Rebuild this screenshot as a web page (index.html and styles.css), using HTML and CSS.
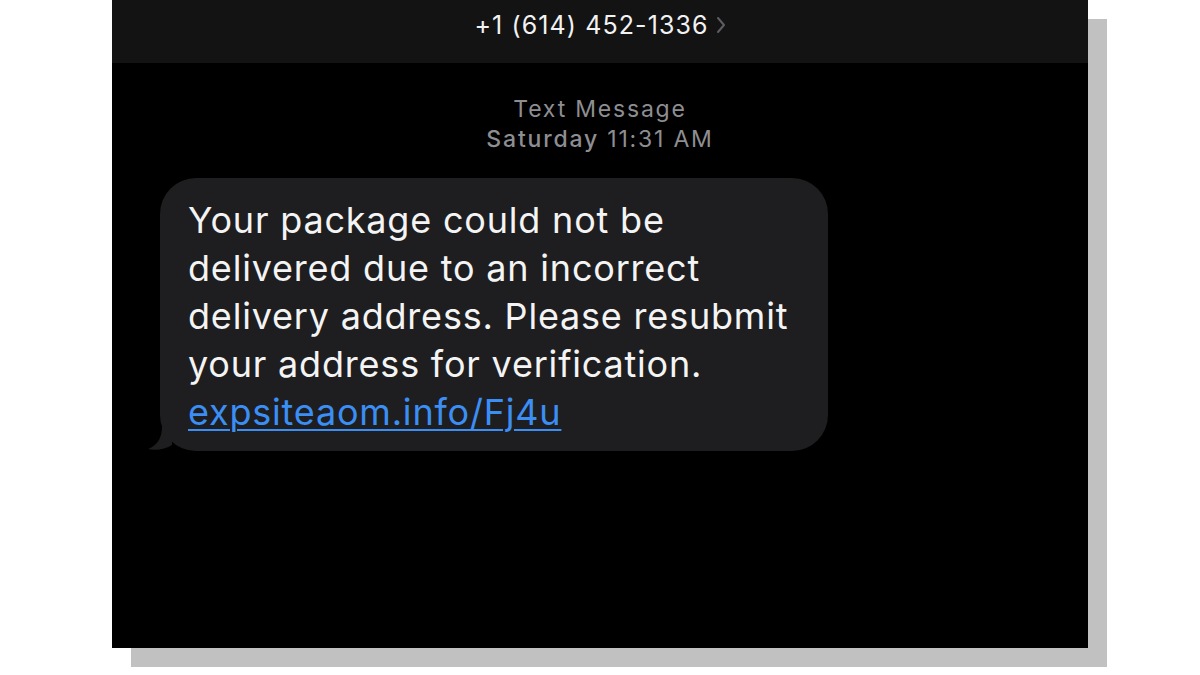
FILE: index.html
```html
<!DOCTYPE html>
<html>
<head>
<meta charset="utf-8">
<link rel="stylesheet" href="styles.css">
</head>
<body>
<div class="page">
  <div class="phone">
    <div class="header">
      <span class="number">+1 (614) 452-1336</span>
      <svg class="chev" width="10" height="18" viewBox="0 0 10 18"><path d="M2 2 L8 9 L2 16" fill="none" stroke="#5e5e62" stroke-width="2" stroke-linecap="round" stroke-linejoin="round"/></svg>
    </div>
    <div class="thread">
      <div class="stamp">
        <div class="kind">Text Message</div>
        <div class="time"><span class="day">Saturday</span> 11:31 AM</div>
      </div>
      <div class="bubble-row">
        <div class="bubble">
          <svg class="tail" width="24" height="24" viewBox="0 0 24 24"><path d="M24 0 L14 0 C14 12 8 19 0 22 C8 24 18 22 24 18 Z" fill="#1e1e20"/></svg>
          <p>Your package could not be<br>delivered due to an incorrect<br>delivery address. Please resubmit<br>your address for verification.<br><a href="#">expsiteaom.info/Fj4u</a></p>
        </div>
      </div>
    </div>
  </div>
</div>
</body>
</html>
```
FILE: styles.css
```css
html, body {
  margin: 0;
  padding: 0;
  background: #ffffff;
}
.page {
  width: 1200px;
  height: 675px;
  overflow: hidden;
  padding-left: 112px;
  box-sizing: border-box;
}
.phone {
  width: 976px;
  height: 648px;
  background: #000;
  box-shadow: 19px 19px 0 #c1c1c1;
  display: flex;
  flex-direction: column;
  font-family: Inter, "Noto Sans", sans-serif;
}
.header {
  height: 63px;
  background: #131313;
  display: flex;
  align-items: center;
  justify-content: center;
  gap: 7px;
  padding-bottom: 14px;
  box-sizing: border-box;
}
.number {
  color: #f2f2f2;
  font-size: 25px;
  letter-spacing: 1.1px;
}
.chev {
  margin-top: 1px;
}
.thread {
  display: flex;
  flex-direction: column;
}
.stamp {
  text-align: center;
  color: #8e8e92;
  font-size: 23px;
  line-height: 30px;
  margin-top: 31px;
  letter-spacing: 1.8px;
}
.day {
  font-weight: 500;
}
.bubble-row {
  padding-left: 48px;
  margin-top: 24px;
}
.bubble {
  position: relative;
  width: 668px;
  height: 273px;
  box-sizing: border-box;
  background: #1e1e20;
  border-radius: 36px;
  padding: 18px 10px 0 28px;
}
.tail {
  position: absolute;
  left: -12px;
  bottom: 0;
}
.bubble p {
  margin: 0;
  color: #f4f4f4;
  font-size: 36px;
  line-height: 48px;
  letter-spacing: 0.8px;
  white-space: nowrap;
}
.bubble a {
  color: #3b8ff4;
  text-decoration: underline;
  text-decoration-thickness: 2px;
  text-underline-offset: 4px;
}
```
